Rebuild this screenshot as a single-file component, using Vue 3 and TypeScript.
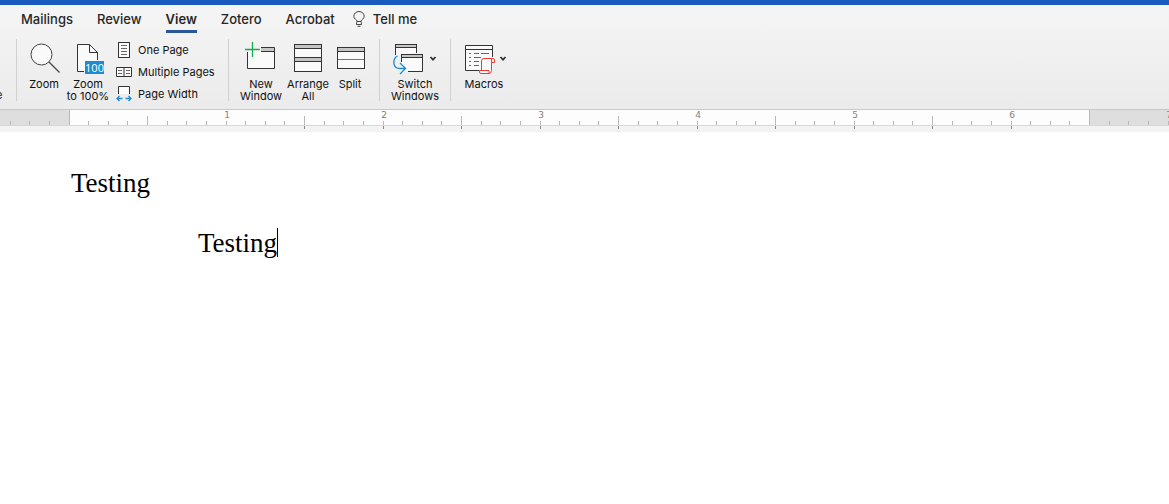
<script setup lang="ts">
import { ref } from 'vue'

const tabs: string[] = ['Mailings', 'Review', 'View', 'Zotero', 'Acrobat']
const active = ref<string>('View')

const origin = 69
const inch = 157
interface Tick { x: number; top: number; bottom: number }

const ticks: Tick[] = []
for (let i = -3; i <= 56; i++) {
  if (i === 0 || i === 52) continue
  const half = i % 4 === 0 && i % 8 !== 0
  ticks.push({ x: Math.floor(origin + (i * inch) / 8), top: half ? 6 : 11, bottom: 15 })
}
const tabStops: number[] = Array.from({ length: 10 }, (_, i) => Math.floor(origin + ((i + 3) * inch) / 2))
const numbers: number[] = [1, 2, 3, 4, 5, 6, 7]
</script>

<template>
  <div class="window">
    <header class="ribbon">
      <nav class="tabs" aria-label="Ribbon tabs">
        <button v-for="t in tabs" :key="t" type="button" class="tab" :class="{ active: t === active }" @click="active = t">{{ t }}</button>
        <button type="button" class="tab tell">
          <svg width="12" height="16" viewBox="0 0 12 16" fill="none" stroke="#444" aria-hidden="true">
            <path d="M4 11.5V10C3.6 8.5 .8 8 .8 5.300a5.200 4.800 0 0 1 10.400 0C11.200 8 8.400 8.500 8 10v1.500M4 10.500h4M3.500 11.500v2h5v-2M4.500 15.300h3" />
          </svg>
          Tell me
        </button>
      </nav>

      <div class="tools">
        <div class="group cut"><span>e</span></div>

        <div class="group zooming">
          <button type="button" class="tool w40">
            <svg width="40" height="38" fill="none" stroke="#444" aria-hidden="true">
              <circle cx="17.500" cy="14.500" r="10.500" fill="#fafafa" />
              <path d="M25 22L35.500 32.500" stroke-width="1.300" />
            </svg>
            <span>Zoom</span>
          </button>
          <button type="button" class="tool w48">
            <svg width="48" height="38" fill="none" stroke="#333" aria-hidden="true">
              <path d="M13.500 4.500H25.500L33.500 12.500V31.500H13.500Z" fill="#fafafa" stroke="none" />
              <path d="M20 31.500H13.500V4.500H25.500L33.500 12.500V20M25.500 4.500V12.500H33.500" />
              <rect x="21" y="21" width="19" height="13" fill="#1e8bd1" stroke="none" />
              <text x="30.500" y="32" text-anchor="middle" class="hundred">100</text>
            </svg>
            <span>Zoom<br>to 100%</span>
          </button>
          <div class="stack">
            <button type="button" class="small">
              <svg width="16" height="22" fill="none" stroke="#333" aria-hidden="true">
                <rect x="2.500" y="3.500" width="11" height="15" fill="#fafafa" />
                <path d="M5 6.500h6M5 9.500h6M5 12.500h6M5 15.500h6" stroke="#666" />
              </svg>
              One Page
            </button>
            <button type="button" class="small">
              <svg width="16" height="22" fill="none" stroke="#333" aria-hidden="true">
                <path d="M.5 6.500h15v9H.5zM8 6.500v9" fill="#fafafa" />
                <path d="M2 9.500h4M2 12.500h4M10 9.500h4M10 12.500h4" stroke="#666" />
              </svg>
              Multiple Pages
            </button>
            <button type="button" class="small">
              <svg width="16" height="22" fill="none" stroke="#333" aria-hidden="true">
                <path d="M2.500 11V3.500h11V11" fill="#fafafa" />
                <path d="M1 15.500h5.500M9.500 15.500H15M3.500 13L1 15.500L3.500 18M12.500 13L15 15.500L12.500 18" stroke="#1e8bd1" stroke-width="1.300" />
              </svg>
              Page Width
            </button>
          </div>
        </div>

        <div class="group windows">
          <button type="button" class="tool w48">
            <svg width="48" height="38" fill="none" stroke="#333" aria-hidden="true">
              <path d="M10.500 11V28.500H37.500V7.500H24" fill="#fafafa" stroke="none" />
              <rect x="24" y="7.500" width="13" height="4" fill="#c6c6c6" stroke="none" />
              <path d="M10.500 12V28.500H37.500V7.500H24M24 11.500H37" />
              <path d="M8 9.500H23M15.500 2V17" stroke="#16a94d" stroke-width="1.300" />
            </svg>
            <span>New<br>Window</span>
          </button>
          <button type="button" class="tool w46">
            <svg width="46" height="38" fill="none" stroke="#333" aria-hidden="true">
              <rect x="9.500" y="4.500" width="27" height="27" fill="#fafafa" />
              <rect x="9.500" y="4.500" width="27" height="4" fill="#c6c6c6" />
              <rect x="9.500" y="17.500" width="27" height="4" fill="#c6c6c6" />
            </svg>
            <span>Arrange<br>All</span>
          </button>
          <button type="button" class="tool w38">
            <svg width="38" height="38" fill="none" stroke="#333" aria-hidden="true">
              <rect x="6.500" y="7.500" width="27" height="21" fill="#fafafa" />
              <rect x="6.500" y="7.500" width="27" height="4" fill="#c6c6c6" />
              <path d="M7 19.500H33" stroke="#777" />
            </svg>
            <span>Split</span>
          </button>
        </div>

        <div class="group menu-group">
          <button type="button" class="tool w54">
            <svg width="54" height="38" fill="none" stroke="#333" aria-hidden="true">
              <path d="M7.500 15V4.500H28.500V13" fill="#fafafa" />
              <rect x="7.500" y="4.500" width="21" height="3" fill="#c6c6c6" />
              <path d="M13.500 14.500H34.500V31.500H13.500Z" fill="#fafafa" stroke="none" />
              <rect x="13.500" y="14.500" width="21" height="3" fill="#c6c6c6" />
              <path d="M13.500 22V14.500H34.500V31.500H20" />
              <path d="M9.500 16C4.500 18.500 4 28.500 12 28.500H17.500M12 23L17.500 28.500L12 34" stroke="#1e8bd1" stroke-width="1.300" />
              <path d="M42.500 17L45 19.700L47.500 17" stroke-width="1.700" />
            </svg>
            <span>Switch<br>Windows</span>
          </button>
        </div>

        <div class="group last">
          <button type="button" class="tool w54">
            <svg width="54" height="38" fill="none" stroke="#333" aria-hidden="true">
              <path d="M8.500 5.500H35.500V30.500H8.500Z" fill="#fafafa" stroke="none" />
              <path d="M35.500 17V5.500H8.500V30.500H22M8.500 9.500H35.500" />
              <path d="M12 13.500h2M17 13.500h5M24 13.500h8M12 17.500h2M17 17.500h7M12 21.500h2M17 21.500h5M12 25.500h2M17 25.500h5" stroke="#666" />
              <path d="M24.500 30.500V21Q24.500 18.500 27 18.500H36Q37.500 18.500 37.500 20V22.500H34.500V30.500Q34.500 33.500 32 33.500H24Q22.500 33.500 22.500 32V30.500H32V33.500M34.500 22.500V19" stroke="#f03a35" fill="#fafafa" />
              <path d="M43.500 17L46 19.700L48.500 17" stroke-width="1.700" />
            </svg>
            <span>Macros</span>
          </button>
        </div>
      </div>
    </header>

    <div class="ruler">
      <svg width="100%" height="22" aria-label="Ruler" shape-rendering="crispEdges">
        <rect width="100%" height="22" fill="#f3f3f3" />
        <rect width="100%" height="15" fill="#dedede" />
        <rect :x="origin" width="1020" height="15" fill="#fdfdfd" />
        <rect y="15" width="100%" height="1" fill="#d9d9d9" />
        <rect :x="origin" width="1" height="15" fill="#b9b9b9" />
        <rect :x="origin + 1020" width="1" height="15" fill="#b9b9b9" />
        <rect v-for="t in ticks" :key="t.x" :x="t.x" :y="t.top" width="1" :height="t.bottom - t.top" fill="#b8b8b8" />
        <rect v-for="x in tabStops" :key="x" :x="x" y="16" width="1" height="3" fill="#888" />
        <text v-for="n in numbers" :key="n" :x="origin + n * inch + 1" y="8" text-anchor="middle" class="number">{{ n }}</text>
      </svg>
    </div>

    <main class="page" role="textbox" aria-label="Document" aria-multiline="true">
      <p>Testing</p>
      <p class="indented">Testing<span class="caret"></span></p>
    </main>
  </div>
</template>

<style>
body { margin: 0; background: #fff; }
</style>

<style scoped>
.window {
  overflow: hidden;
  font-family: Inter, "Liberation Sans", sans-serif;
  color: #262626;
}
button {
  margin: 0;
  padding: 0;
  border: 0;
  background: none;
  font: inherit;
  color: inherit;
}
svg { display: block; flex: none; }
.ribbon {
  border-top: 5px solid #185abd;
  border-bottom: 1px solid #c8c8c8;
  background: linear-gradient(#f5f5f5, #ebebeb);
}
.tabs {
  display: flex;
  gap: 24px;
  height: 34px;
  padding-left: 21px;
  font-size: 13px;
  font-weight: 500;
}
.tab {
  box-sizing: border-box;
  height: 28px;
  border-bottom: 3px solid transparent;
  line-height: 16px;
  padding-top: 2px;
  white-space: nowrap;
}
.tab.active {
  font-weight: 600;
  border-image: linear-gradient(#2b579a, #2b579a) 1;
}
.tell {
  display: flex;
  align-items: center;
  gap: 8px;
  margin-left: -6px;
}
.tools {
  display: flex;
  height: 70px;
  font-size: 11px;
  line-height: 12px;
  color: #111;
}
.group {
  box-sizing: border-box;
  display: flex;
  height: 62px;
  border-right: 1px solid #d0d0d0;
}
.cut {
  width: 17px;
  align-items: flex-end;
}
.cut span { margin-left: -4px; }
.zooming { width: 212px; padding-left: 7px; }
.windows { width: 151px; padding-left: 8px; }
.menu-group { width: 71px; padding-left: 8px; }
.last { padding-left: 6px; border-right: 0; }
.tool {
  display: flex;
  flex-direction: column;
  align-items: center;
  padding-top: 1px;
  text-align: center;
  white-space: nowrap;
}
.w38 { width: 38px; }
.w40 { width: 40px; }
.w46 { width: 46px; }
.w48 { width: 48px; }
.w54 { width: 54px; }
.hundred {
  font-family: "Open Sans", sans-serif;
  font-size: 11px;
  fill: #fff;
  stroke: none;
}
.stack {
  display: flex;
  flex-direction: column;
  margin-left: 4px;
}
.small {
  display: flex;
  align-items: center;
  gap: 6px;
  height: 22px;
  white-space: nowrap;
}
.ruler { overflow: hidden; }
.number {
  font-family: "DejaVu Sans", sans-serif;
  font-size: 9px;
  fill: #808080;
}
.page {
  padding: 36px 71px;
  font-family: "Liberation Serif", "Times New Roman", serif;
  font-size: 27px;
  line-height: 30px;
  color: #000;
}
.page p { margin: 0 0 30px; }
.page .indented { display: flex; padding-left: 127px; }
.caret {
  width: 1px;
  height: 29px;
  background: #000;
}
</style>
